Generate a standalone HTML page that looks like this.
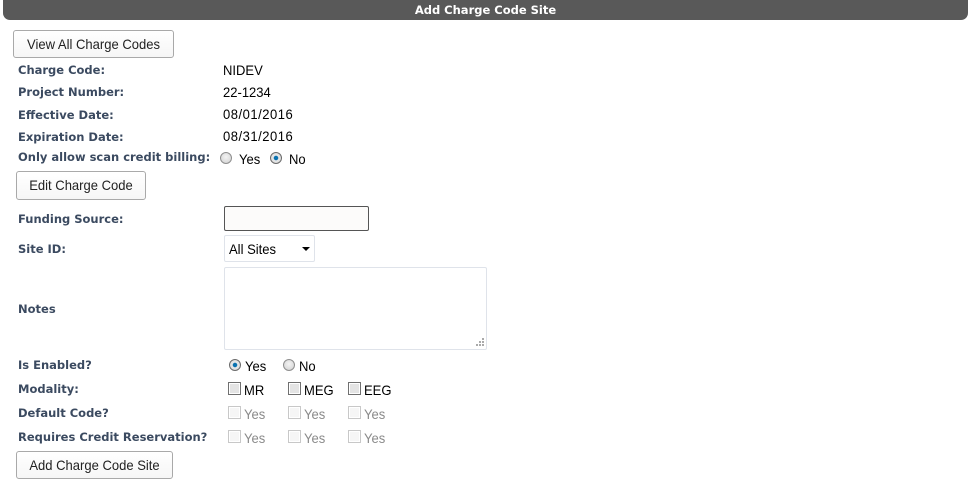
<!DOCTYPE html>
<html><head><meta charset="utf-8"><style>
html,body{margin:0;padding:0;background:#fff;width:973px;height:486px;overflow:hidden}
body{position:relative;font-family:"Liberation Sans",sans-serif;font-size:14px;color:#000}
div,span{position:absolute;white-space:nowrap;box-sizing:border-box}
.h{left:3px;top:0;width:965px;height:20px;background:#595959;border-radius:0 0 7px 7px;color:#fff;font:bold 11.5px/20px "DejaVu Sans",sans-serif;text-align:center}
.b{background:linear-gradient(#fff,#f6f6f6);border:1px solid #a9a9a9;border-radius:3px;text-align:center;color:#222;font-size:14px}
.b div{left:0;right:0;top:0;transform:scaleX(.93);transform-origin:center}
.l{left:18px;font:bold 11.5px/14px "DejaVu Sans",sans-serif;color:#3b4a60}
.t{line-height:16px;transform:scaleX(.93);transform-origin:left}
.g{color:#8a8a8a;line-height:16px;transform:scaleX(.93);transform-origin:left}
.r{width:12px;height:12px;border-radius:50%;border:1px solid #8f8f8f;background:radial-gradient(circle at 50% 40%,#f4f4f4,#cfcfcf)}
.r.on{background:radial-gradient(circle,#0a72b0 0,#0a72b0 28%,#e8e8e8 36%,#d5d5d5 100%);border-color:#6b6b6b}
.c{width:13px;height:13px;border:1px solid #707070;background:#e4e4e4;box-shadow:inset 0 0 0 1px #fff}
.c.d{border-color:#c8c8c8;background:#f6f6f6}
</style></head><body>
<div class="h">Add Charge Code Site</div>
<div class="b" style="left:13px;top:30px;width:161px;height:28px;line-height:27px"><div>View All Charge Codes</div></div>

<div class="l" style="top:63px">Charge Code:</div>
<div class="l" style="top:85px">Project Number:</div>
<div class="l" style="top:108px">Effective Date:</div>
<div class="l" style="top:130px">Expiration Date:</div>
<div class="l" style="top:150px">Only allow scan credit billing:</div>
<div class="t" style="left:223px;top:62px">NIDEV</div>
<div class="t" style="left:223px;top:84px">22-1234</div>
<div class="t" style="left:223px;top:106px;letter-spacing:.54px">08/01/2016</div>
<div class="t" style="left:223px;top:128px;letter-spacing:.54px">08/31/2016</div>
<div class="r" style="left:220px;top:152px"></div>
<div class="t" style="left:239px;top:151px">Yes</div>
<div class="r on" style="left:270px;top:152px"></div>
<div class="t" style="left:289px;top:151px">No</div>

<div class="b" style="left:16px;top:171px;width:130px;height:29px;line-height:27px"><div>Edit Charge Code</div></div>
<div class="l" style="top:212px">Funding Source:</div>
<div style="left:224px;top:206px;width:145px;height:25px;border:1px solid #555;border-radius:2px;background:#fcfbfa"></div>
<div class="l" style="top:242px">Site ID:</div>
<div style="left:224px;top:235px;width:91px;height:27px;border:1px solid #dfe3ea;border-radius:2px;background:#fff"></div>
<div class="t" style="left:229px;top:241px">All Sites</div>
<div style="left:302px;top:247px;width:0;height:0;border:4px solid transparent;border-top:4px solid #000;border-bottom:0"></div>
<div class="l" style="top:302px">Notes</div>
<div style="left:224px;top:267px;width:263px;height:83px;border:1px solid #dfe3ea;border-radius:2px;background:#fff"></div>
<svg style="position:absolute;left:474px;top:338px" width="10" height="10"><g fill="#aaa"><rect x="8" y="0" width="2" height="2"/><rect x="5" y="3" width="2" height="2"/><rect x="8" y="3" width="2" height="2"/><rect x="2" y="6" width="2" height="2"/><rect x="5" y="6" width="2" height="2"/><rect x="8" y="6" width="2" height="2"/></g></svg>

<div class="l" style="top:358px">Is Enabled?</div>
<div class="r on" style="left:229px;top:359px"></div>
<div class="t" style="left:245px;top:358px">Yes</div>
<div class="r" style="left:283px;top:359px"></div>
<div class="t" style="left:299px;top:358px">No</div>

<div class="l" style="top:382px">Modality:</div>
<div class="c" style="left:228px;top:382px"></div>
<div class="t" style="left:244px;top:382px">MR</div>
<div class="c" style="left:288px;top:382px"></div>
<div class="t" style="left:304px;top:382px">MEG</div>
<div class="c" style="left:348px;top:382px"></div>
<div class="t" style="left:364px;top:382px">EEG</div>

<div class="l" style="top:406px">Default Code?</div>
<div class="c d" style="left:228px;top:406px"></div>
<div class="g" style="left:244px;top:406px">Yes</div>
<div class="c d" style="left:288px;top:406px"></div>
<div class="g" style="left:304px;top:406px">Yes</div>
<div class="c d" style="left:348px;top:406px"></div>
<div class="g" style="left:364px;top:406px">Yes</div>

<div class="l" style="top:430px">Requires Credit Reservation?</div>
<div class="c d" style="left:228px;top:430px"></div>
<div class="g" style="left:244px;top:430px">Yes</div>
<div class="c d" style="left:288px;top:430px"></div>
<div class="g" style="left:304px;top:430px">Yes</div>
<div class="c d" style="left:348px;top:430px"></div>
<div class="g" style="left:364px;top:430px">Yes</div>

<div class="b" style="left:16px;top:451px;width:157px;height:28px;line-height:27px"><div>Add Charge Code Site</div></div>
</body></html>
